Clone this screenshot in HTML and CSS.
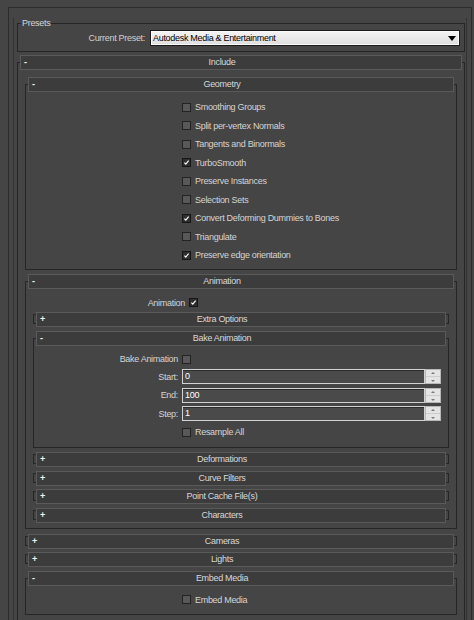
FILE: index.html
```html
<!DOCTYPE html>
<html>
<head>
<meta charset="utf-8">
<link rel="stylesheet" href="styles.css">
</head>
<body>
<div class="panel">
  <div class="inner">
    <fieldset class="group">
      <legend>Presets</legend>
      <div class="preset-row">
        <span class="plabel">Current Preset:</span>
        <div class="select">
          <span class="sel-text">Autodesk Media &amp; Entertainment</span>
          <svg class="sel-arrow" width="8" height="5" viewBox="0 0 8 5"><path d="M0 0H8L4 5Z" fill="#000"/></svg>
        </div>
      </div>
    </fieldset>

    <section class="rollout include">
      <div class="hd"><span class="tog">-</span><span class="ttl">Include</span></div>
      <div class="body">

        <section class="rollout">
          <div class="hd"><span class="tog">-</span><span class="ttl">Geometry</span></div>
          <div class="form lv1 geo">
            <span></span><span class="ctl"><span class="cb"></span>Smoothing Groups</span>
            <span></span><span class="ctl"><span class="cb"></span>Split per-vertex Normals</span>
            <span></span><span class="ctl"><span class="cb"></span>Tangents and Binormals</span>
            <span></span><span class="ctl"><span class="cb on"><svg viewBox="0 0 9 9"><path d="M1.8 4.6L3.6 6.6L7.2 2"/></svg></span>TurboSmooth</span>
            <span></span><span class="ctl"><span class="cb"></span>Preserve Instances</span>
            <span></span><span class="ctl"><span class="cb"></span>Selection Sets</span>
            <span></span><span class="ctl"><span class="cb on"><svg viewBox="0 0 9 9"><path d="M1.8 4.6L3.6 6.6L7.2 2"/></svg></span>Convert Deforming Dummies to Bones</span>
            <span></span><span class="ctl"><span class="cb"></span>Triangulate</span>
            <span></span><span class="ctl"><span class="cb on"><svg viewBox="0 0 9 9"><path d="M1.8 4.6L3.6 6.6L7.2 2"/></svg></span>Preserve edge orientation</span>
          </div>
        </section>

        <section class="rollout">
          <div class="hd"><span class="tog">-</span><span class="ttl">Animation</span></div>
          <div class="body anim">
            <div class="form lv1 animform">
              <span class="lab">Animation</span><span class="ctl"><span class="cb on"><svg viewBox="0 0 9 9"><path d="M1.8 4.6L3.6 6.6L7.2 2"/></svg></span></span>
            </div>
            <section class="rollout closed">
              <div class="hd"><span class="tog">+</span><span class="ttl">Extra Options</span></div>
            </section>
            <section class="rollout">
              <div class="hd"><span class="tog">-</span><span class="ttl">Bake Animation</span></div>
              <div class="form lv2 bake">
                <span class="lab">Bake Animation</span><span class="ctl"><span class="cb"></span></span>
                <span class="lab">Start:</span><span class="ctl"><span class="num">0</span><span class="spin"><span class="up"></span><span class="dn"></span></span></span>
                <span class="lab">End:</span><span class="ctl"><span class="num">100</span><span class="spin"><span class="up"></span><span class="dn"></span></span></span>
                <span class="lab">Step:</span><span class="ctl"><span class="num">1</span><span class="spin"><span class="up"></span><span class="dn"></span></span></span>
                <span></span><span class="ctl"><span class="cb"></span>Resample All</span>
              </div>
            </section>
            <section class="rollout closed">
              <div class="hd"><span class="tog">+</span><span class="ttl">Deformations</span></div>
            </section>
            <section class="rollout closed">
              <div class="hd"><span class="tog">+</span><span class="ttl">Curve Filters</span></div>
            </section>
            <section class="rollout closed">
              <div class="hd"><span class="tog">+</span><span class="ttl">Point Cache File(s)</span></div>
            </section>
            <section class="rollout closed">
              <div class="hd"><span class="tog">+</span><span class="ttl">Characters</span></div>
            </section>
          </div>
        </section>

        <section class="rollout closed">
          <div class="hd"><span class="tog">+</span><span class="ttl">Cameras</span></div>
        </section>
        <section class="rollout closed">
          <div class="hd"><span class="tog">+</span><span class="ttl">Lights</span></div>
        </section>
        <section class="rollout">
          <div class="hd"><span class="tog">-</span><span class="ttl">Embed Media</span></div>
          <div class="form lv1 embed">
            <span></span><span class="ctl"><span class="cb"></span>Embed Media</span>
          </div>
        </section>

      </div>
    </section>
  </div>
</div>
</body>
</html>
```

FILE: styles.css
```css
html, body {
  margin: 0;
  background: #454545;
}
body {
  font-family: "Liberation Sans", Arial, sans-serif;
  font-size: 9px;
  letter-spacing: -0.3px;
  color: #d4d4d4;
}

.panel {
  margin: 7px 2px 0 8px;
  border: 1px solid #2c2c2c;
  border-bottom: none;
}
.inner {
  margin: 0 4px 0 4px;
  border-left: 1px solid #333;
  border-right: 1px solid #333;
  padding-bottom: 20px;
}

/* Presets group box */
.group {
  margin: 10px 1px 0 3px;
  padding: 0 4px 5px 3px;
  border: 1px solid #262626;
  min-width: 0;
}
.group legend {
  padding: 0 1px;
  line-height: 11px;
  color: #d4d4d4;
}
.preset-row {
  display: flex;
  justify-content: flex-end;
  align-items: center;
  gap: 5px;
  margin-top: 1px;
}
.plabel {
  color: #d0d0d0;
}
.select {
  box-sizing: border-box;
  width: 310px;
  height: 16px;
  display: flex;
  align-items: center;
  border: 1px solid #1b1b1b;
  background: linear-gradient(#f4f4f4, #dedede);
  box-shadow: inset 0 0 0 1px #fafafa;
  color: #000;
  padding: 0 2px 0 2px;
}
.sel-text {
  flex: 1;
  line-height: 13px;
}
.sel-arrow {
  display: block;
  margin-right: 1px;
}

/* Rollouts */
.rollout {
  border: 1px solid #262626;
  margin-top: 11px;
}
.rollout.include {
  margin: 10px 1px 0 3px;
}
.hd {
  box-sizing: border-box;
  height: 15px;
  margin: -8px 2px 0;
  display: flex;
  align-items: center;
  border: 1px solid #5a5a5a;
  background: #3c3c3c;
  color: #d8d8d8;
  line-height: 13px;
}
.tog {
  box-sizing: border-box;
  width: 10px;
  padding-left: 3px;
  color: #f2f2f2;
  font-weight: bold;
}
.ttl {
  flex: 1;
  text-align: center;
  padding-right: 48px;
}
.rollout.closed {
  box-sizing: border-box;
  height: 10px;
  margin-top: 8.5px;
}
.rollout.closed > .hd {
  margin-top: -3px;
}

.body {
  padding: 0 7px;
}
.include > .body {
  padding-bottom: 12px;
}
.body > .rollout:first-child {
  margin-top: 14px;
}
.form + .rollout.closed {
  margin-top: 2px;
}
.rollout.closed + .rollout:not(.closed) {
  margin-top: 13.5px;
}
.rollout:not(.closed) + .rollout.closed {
  margin-top: 6.5px;
}
.anim {
  padding-bottom: 8.5px;
}

/* Forms */
.form {
  display: grid;
  grid-template-columns: var(--lab) max-content;
  column-gap: 4px;
  grid-auto-rows: 18.5px;
  align-items: center;
}
.lv1 { --lab: 152px; }
.lv2 { --lab: 144px; }
.geo { padding: 6px 0 4.5px; }
.animform { padding-top: 4.5px; }
.bake {
  grid-template-rows: 17px;
  padding: 5px 0 5px;
}
.embed { padding: 4.75px 0 4.75px; }

.lab {
  text-align: right;
  color: #d4d4d4;
}
.ctl {
  display: flex;
  align-items: center;
  color: #d4d4d4;
}

.cb {
  box-sizing: border-box;
  width: 9px;
  height: 9px;
  margin-right: 4px;
  border: 1px solid #232323;
  background: #585858;
  display: inline-block;
}
.cb.on {
  background: #2f2f2f;
  border-color: #161616;
}
.cb svg {
  display: block;
  width: 7px;
  height: 7px;
}
.cb svg path {
  fill: none;
  stroke: #fff;
  stroke-width: 1.4;
}

.num {
  box-sizing: border-box;
  width: 243px;
  height: 15px;
  border: 1px solid #d2d2d2;
  box-shadow: inset 0 1px 0 #2b2b2b;
  background: #4a4a4a;
  color: #fff;
  padding-left: 2px;
  line-height: 13px;
}
.spin {
  box-sizing: border-box;
  width: 16px;
  height: 15px;
  border: 1px solid #b8b8b8;
  background: #e4e4e4;
  display: flex;
  flex-direction: column;
}
.spin .up, .spin .dn {
  flex: 1;
  position: relative;
}
.spin .up {
  border-bottom: 1px solid #cdcdcd;
}
.spin .up::after, .spin .dn::after {
  content: "";
  position: absolute;
  left: 5px;
  width: 0;
  height: 0;
  border-left: 2px solid transparent;
  border-right: 2px solid transparent;
}
.spin .up::after {
  top: 2px;
  border-bottom: 2px solid #7a7a7a;
}
.spin .dn::after {
  bottom: 1px;
  border-top: 2px solid #7a7a7a;
}
```
